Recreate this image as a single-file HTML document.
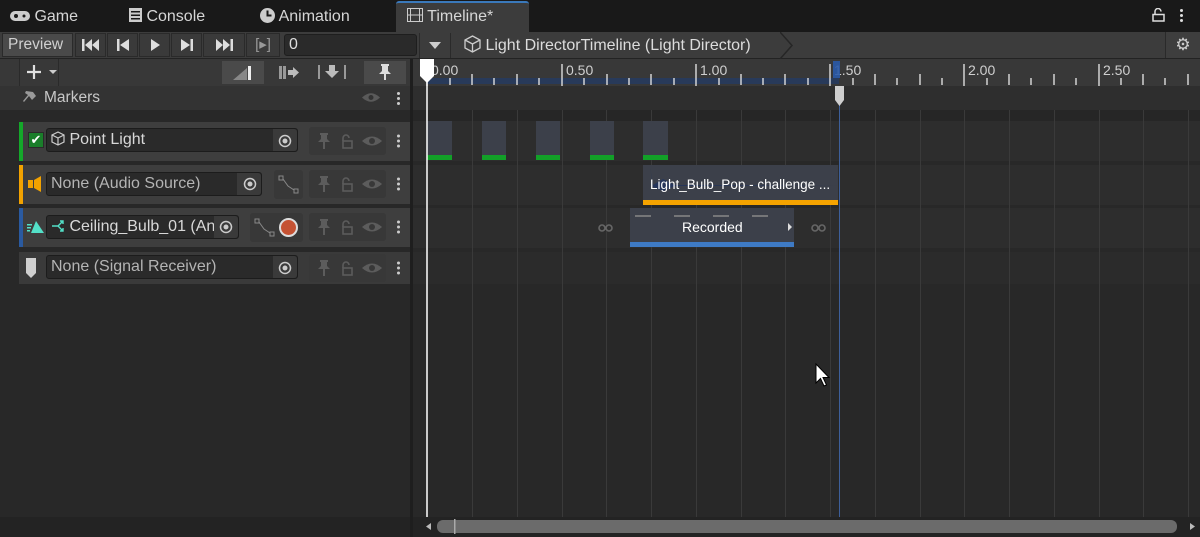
<!DOCTYPE html>
<html><head><style>
*{margin:0;padding:0;box-sizing:border-box}
body{width:1200px;height:537px;background:#282828;font-family:"Liberation Sans",sans-serif;color:#d2d2d2;position:relative;overflow:hidden;font-size:15px}
.a{position:absolute}
.tab{position:absolute;top:0;height:32px;line-height:33px;font-size:16px;color:#d6d6d6}
.btn{position:absolute;top:33px;height:24px;background:#3a3a3a;border:1px solid #2a2a2a}
.hdr{position:absolute;left:19px;width:391px;background:#3e3e3e}
.fld{position:absolute;height:24px;background:#2a2a2a;border:1px solid #1c1c1c;border-radius:3px;font-size:16px;line-height:22px;padding-left:4px;color:#d8d8d8;overflow:hidden;white-space:nowrap}
.tgt{position:absolute;top:0;right:0;width:24px;height:22px;background:#3a3a3a;border-radius:0 3px 3px 0}
.grp{position:absolute;background:#383838;border-radius:3px}
.dots{position:absolute;left:397px;width:3px}
</style></head><body>
<div class="a" style="left:0;top:0;width:1200px;height:32px;background:#191919"></div>
<div class="a" style="left:396px;top:1px;width:133px;height:31px;background:#3c3c3c;border-top:2px solid #3a79bb;border-radius:3px 3px 0 0"></div>
<div class="tab" style="left:10px"><svg width="20" height="12" style="vertical-align:-1px"><rect x="0" y="1" width="20" height="10" rx="5" fill="#ccc"/><circle cx="6" cy="6" r="2" fill="#191919"/><circle cx="14" cy="6" r="1.5" fill="#191919"/></svg> Game</div>
<div class="tab" style="left:129px"><svg width="13" height="14" style="vertical-align:-1px"><rect x="0" y="0" width="13" height="14" fill="#ccc"/><rect x="2" y="3" width="9" height="1.5" fill="#191919"/><rect x="2" y="6.5" width="9" height="1.5" fill="#191919"/><rect x="2" y="10" width="9" height="1.5" fill="#191919"/></svg> Console</div>
<div class="tab" style="left:260px"><svg width="15" height="15" style="vertical-align:-2px"><circle cx="7.5" cy="7.5" r="7.5" fill="#ccc"/><path d="M7.5 2.5V7.5H11.5" stroke="#191919" stroke-width="2" fill="none"/></svg> Animation</div>
<div class="tab" style="left:407px"><svg width="16" height="14" style="vertical-align:-1px"><rect x="0.5" y="0.5" width="15" height="13" fill="none" stroke="#ccc"/><rect x="3" y="1" width="1" height="12" fill="#ccc"/><rect x="12" y="1" width="1" height="12" fill="#ccc"/><rect x="0" y="6.5" width="16" height="1" fill="#ccc"/></svg> Timeline*</div>
<svg class="a" style="left:1152px;top:8px" width="14" height="14"><path d="M3 6V3.5A3 3 0 0 1 9 3.5" stroke="#ddd" stroke-width="1.5" fill="none"/><rect x="1" y="6.5" width="11" height="6.5" fill="none" stroke="#ddd" stroke-width="1.5"/></svg>
<div class="a" style="left:1180px;top:9px;width:3px;height:3px;background:#ddd;box-shadow:0 5px #ddd,0 10px #ddd;border-radius:2px"></div>
<div class="a" style="left:0;top:32px;width:1200px;height:27px;background:#3c3c3c;border-bottom:1px solid #232323"></div>
<div class="btn" style="left:2px;width:71px;background:#4a4a4a;font-size:15.5px;line-height:22px;padding-left:5px;color:#d0d0d0">Preview</div>
<div class="btn" style="left:75px;width:31px;text-align:center"><svg width="18" height="12" style="margin-top:5px"><rect x="0" y="0" width="2.5" height="12" fill="#ddd"/><path d="M10 0V12L3 6Z M17 0V12L10 6Z" fill="#ddd"/></svg></div>
<div class="btn" style="left:107px;width:31px;text-align:center"><svg width="12" height="12" style="margin-top:5px"><rect x="0" y="0" width="2.5" height="12" fill="#ddd"/><path d="M12 0V12L3 6Z" fill="#ddd"/></svg></div>
<div class="btn" style="left:139px;width:31px;text-align:center"><svg width="12" height="12" style="margin-top:5px"><path d="M2 0V12L11 6Z" fill="#ddd"/></svg></div>
<div class="btn" style="left:171px;width:31px;text-align:center"><svg width="12" height="12" style="margin-top:5px"><path d="M0 0V12L9 6Z" fill="#ddd"/><rect x="9.5" y="0" width="2.5" height="12" fill="#ddd"/></svg></div>
<div class="btn" style="left:203px;width:42px;text-align:center"><svg width="18" height="12" style="margin-top:5px"><path d="M1 0V12L8 6Z M8 0V12L15 6Z" fill="#ddd"/><rect x="15.5" y="0" width="2.5" height="12" fill="#ddd"/></svg></div>
<div class="btn" style="left:246px;width:34px;text-align:center;font-size:15px;line-height:22px;color:#999">[▸]</div>
<div class="a" style="left:284px;top:34px;width:133px;height:22px;background:#2a2a2a;border:1px solid #1e1e1e;border-radius:3px;font-size:16px;line-height:20px;padding-left:4px;color:#ddd">0</div>
<div class="a" style="left:419px;top:33px;width:1px;height:25px;background:#2a2a2a"></div>
<svg class="a" style="left:429px;top:42px" width="12" height="8"><path d="M0 0H12L6 7Z" fill="#ccc"/></svg>
<div class="a" style="left:450px;top:33px;width:1px;height:25px;background:#2a2a2a"></div>
<div class="a" style="left:464px;top:33px;height:25px;font-size:16px;line-height:25px;color:#dcdcdc"><svg width="17" height="18" style="vertical-align:-3px"><path d="M8.5 1L16 5V13L8.5 17L1 13V5Z M1 5L8.5 9L16 5 M8.5 9V17" stroke="#ccc" stroke-width="1.3" fill="none"/></svg> Light DirectorTimeline (Light Director)</div>
<svg class="a" style="left:780px;top:32px" width="20" height="27"><path d="M0 0L12 13.5L0 27" stroke="#262626" stroke-width="1.5" fill="none"/></svg>
<div class="a" style="left:1165px;top:32px;width:1px;height:26px;background:#2a2a2a"></div>
<div class="a" style="left:1166px;top:32px;width:34px;height:26px;background:#3e3e3e;text-align:center;font-size:17px;line-height:26px;color:#ccc">⚙</div>
<div class="a" style="left:0;top:59px;width:410px;height:27px;background:#383838"></div>
<div class="a" style="left:19px;top:59px;width:1px;height:27px;background:#2a2a2a"></div>
<div class="a" style="left:58px;top:59px;width:1px;height:27px;background:#2a2a2a"></div>
<svg class="a" style="left:26px;top:64px" width="34" height="16"><path d="M8 1V15M1 8H15" stroke="#e0e0e0" stroke-width="2.2"/><path d="M23 6H31L27 10Z" fill="#ccc"/></svg>
<div class="a" style="left:222px;top:61px;width:42px;height:23px;background:#4a4a4a"></div>
<svg class="a" style="left:233px;top:65px" width="22" height="15"><path d="M0 15L14 3V15Z" fill="#888"/><rect x="15" y="1" width="3" height="14" fill="#eee"/></svg>
<svg class="a" style="left:279px;top:66px" width="22" height="13"><rect x="0" y="0" width="3" height="13" fill="#999"/><rect x="4" y="0" width="3" height="13" fill="#999"/><path d="M9 4H14V1L20 6.5L14 12V9H9Z" fill="#bbb"/></svg>
<svg class="a" style="left:318px;top:65px" width="28" height="14"><rect x="0" y="0" width="2" height="14" fill="#999"/><rect x="26" y="0" width="2" height="14" fill="#999"/><path d="M11 0H17V6H21L14 13L7 6H11Z" fill="#bbb"/></svg>
<div class="a" style="left:364px;top:61px;width:42px;height:23px;background:#4a4a4a"></div>
<svg class="a" style="left:378px;top:64px" width="14" height="16"><path d="M3 0H11V2H10V7L13 10H8V16H6V10H1L4 7V2H3Z" fill="#ddd"/></svg>
<div class="a" style="left:0;top:86px;width:410px;height:24px;background:#333"></div>
<svg class="a" style="left:23px;top:89px" width="16" height="16"><path d="M3 2L10 3L13 7L9 11L6 7L1 13L0 12L5 6L2 4Z" fill="#9a9a9a"/></svg>
<div class="a" style="left:44px;top:86px;font-size:15.5px;line-height:23px;color:#c8c8c8">Markers</div>
<svg class="a" style="left:361px;top:92px" width="20" height="11"><path d="M1 5.5Q10 -3 19 5.5Q10 14 1 5.5Z" fill="#5a5a5a"/><circle cx="10" cy="5.5" r="2.5" fill="#333"/></svg>
<div class="dots" style="top:92px;height:3px;background:#ccc;box-shadow:0 5px #ccc,0 10px #ccc;border-radius:2px"></div>
<div class="hdr" style="top:122px;height:39px"></div><div class="a" style="left:19px;top:122px;width:4px;height:39px;background:#14a82a"></div>
<div class="hdr" style="top:165px;height:39px"></div><div class="a" style="left:19px;top:165px;width:4px;height:39px;background:#f2a200"></div>
<div class="hdr" style="top:208px;height:39px"></div><div class="a" style="left:19px;top:208px;width:4px;height:39px;background:#2a5aa0"></div>
<div class="hdr" style="top:252px;height:32px;background:#3a3a3a"></div>
<div class="a" style="left:28px;top:132px;width:16px;height:16px;background:#1a7e2a;border:1px solid #2a2a2a;color:#fff;font-size:13px;line-height:14px;text-align:center">✔</div>
<div class="fld" style="left:46px;top:128px;width:252px;padding-left:4px"><svg width="14" height="15" style="vertical-align:-2px"><path d="M7 1L13 4V11L7 14L1 11V4Z M1 4L7 7L13 4 M7 7V14" stroke="#ccc" stroke-width="1.2" fill="none"/></svg> Point Light<div class="tgt"></div></div>
<svg class="a" style="left:28px;top:176px" width="14" height="16"><rect x="0" y="4" width="5" height="8" fill="#f2a200"/><path d="M6 4L13 0V16L6 12Z" fill="#f2a200"/></svg>
<div class="fld" style="left:46px;top:172px;width:216px;color:#b4b4b4">None (Audio Source)<div class="tgt"></div></div>
<div class="grp" style="left:274px;top:170px;width:29px;height:29px"></div>
<svg class="a" style="left:27px;top:220px" width="18" height="14"><path d="M9 1L17 13H4Z" fill="#53e0c8"/><rect x="0" y="4" width="5" height="1.5" fill="#53e0c8"/><rect x="0" y="7" width="4" height="1.5" fill="#53e0c8"/><rect x="0" y="10" width="3" height="1.5" fill="#53e0c8"/></svg>
<div class="fld" style="left:46px;top:215px;width:193px;padding-right:24px"><svg width="14" height="12" style="vertical-align:-1px"><path d="M1 6H7L12 1M7 6L12 11M9 1H12V4M9 11H12V8" stroke="#53e0c8" stroke-width="1.4" fill="none"/></svg> Ceiling_Bulb_01 (Ani<div class="tgt"></div></div>
<div class="grp" style="left:250px;top:213px;width:53px;height:29px"></div>
<div class="a" style="left:279px;top:218px;width:19px;height:19px;border-radius:50%;background:#c55233;border:2px solid #ddd"></div>
<svg class="a" style="left:26px;top:258px" width="10" height="20"><path d="M0 0H10V15L5 20L0 15Z" fill="#d0d0d0"/></svg>
<div class="fld" style="left:46px;top:255px;width:252px;color:#b4b4b4">None (Signal Receiver)<div class="tgt"></div></div>
<svg class="a" style="left:278px;top:174px" width="22" height="22"><rect x="1" y="2" width="4" height="4" fill="none" stroke="#888"/><rect x="16" y="15" width="4" height="4" fill="none" stroke="#888"/><path d="M5 5L10 12L16 16" stroke="#888" fill="none"/></svg>
<svg class="a" style="left:254px;top:217px" width="22" height="22"><rect x="1" y="2" width="4" height="4" fill="none" stroke="#888"/><rect x="16" y="15" width="4" height="4" fill="none" stroke="#888"/><path d="M5 5L10 12L16 16" stroke="#888" fill="none"/></svg>
<svg class="a" style="left:0;top:0" width="410" height="300">
<defs><g id="ple"><rect x="0" y="0" width="77" height="28" rx="3" fill="#383838"/><path d="M11 6H19V8H18V12L21 15H16V22H14V15H9L12 12V8H11Z" fill="#5c5c5c"/><path d="M34 14V11A3 3 0 0 1 40 11" stroke="#5c5c5c" stroke-width="1.6" fill="none"/><rect x="34" y="14" width="9" height="7" fill="none" stroke="#5c5c5c" stroke-width="1.6"/><path d="M53 14Q63 5 73 14Q63 23 53 14Z" fill="#5c5c5c"/><circle cx="63" cy="14" r="3" fill="#383838"/></g>
<g id="dt"><circle cx="1.5" cy="0" r="1.5" fill="#ccc"/><circle cx="1.5" cy="5" r="1.5" fill="#ccc"/><circle cx="1.5" cy="10" r="1.5" fill="#ccc"/></g></defs>
<use href="#ple" x="309" y="127"/><use href="#ple" x="309" y="170"/><use href="#ple" x="309" y="213"/><use href="#ple" x="309" y="254"/>
<use href="#dt" x="397" y="136"/><use href="#dt" x="397" y="179"/><use href="#dt" x="397" y="222"/><use href="#dt" x="397" y="263"/>
<g fill="#ccc"><circle cx="285" cy="141" r="5.5" fill="none" stroke="#ccc" stroke-width="1.5"/><circle cx="285" cy="141" r="2.5"/>
<circle cx="250" cy="184" r="5.5" fill="none" stroke="#ccc" stroke-width="1.5"/><circle cx="250" cy="184" r="2.5"/>
<circle cx="226" cy="227" r="5.5" fill="none" stroke="#ccc" stroke-width="1.5"/><circle cx="226" cy="227" r="2.5"/>
<circle cx="285" cy="268" r="5.5" fill="none" stroke="#ccc" stroke-width="1.5"/><circle cx="285" cy="268" r="2.5"/></g>
</svg>
<div class="a" style="left:410px;top:59px;width:3px;height:478px;background:#1e1e1e"></div>
<div class="a" style="left:0;top:517px;width:410px;height:20px;background:#232323"></div>
<svg class="a" style="left:413px;top:59px" width="787" height="478" font-family="Liberation Sans,sans-serif">
<rect x="0" y="0" width="787" height="27" fill="#383838"/>
<rect x="14" y="19" width="412" height="6" fill="#283a5a"/>
<rect x="0" y="27" width="787" height="24" fill="#2e2e2e"/>
<rect x="0" y="51" width="787" height="11" fill="#262626"/>
<rect x="0" y="62" width="787" height="40" fill="#2d2d2d"/>
<rect x="0" y="106" width="787" height="40" fill="#2d2d2d"/>
<rect x="0" y="149" width="787" height="40" fill="#2d2d2d"/>
<rect x="0" y="193" width="787" height="32" fill="#2b2b2b"/>
<g stroke="#3a3a3a" stroke-width="1">
<path d="M59.5 51V458M104.5 51V458M149.5 51V458M193.5 51V458M238.5 51V458M283.5 51V458M328.5 51V458M372.5 51V458M417.5 51V458M462.5 51V458M507.5 51V458M551.5 51V458M596.5 51V458M641.5 51V458M686.5 51V458M730.5 51V458M775.5 51V458"/>
</g>
<g stroke="#ddd" stroke-width="1.4">
<path d="M14 5V27M149 5V27M283 5V27M417 5V27M551 5V27M686 5V27"/>
<path d="M37 19V26M59 15V26M81 19V26M104 15V26M126 19V26M171 19V26M194 15V26M216 19V26M238 15V26M261 19V26M306 19V26M328 15V26M350 19V26M372 15V26M395 19V26M440 19V26M462 15V26M484 19V26M507 15V26M529 19V26M574 19V26M596 15V26M618 19V26M641 15V26M663 19V26M708 19V26M730 15V26M752 19V26M775 15V26"/>
</g>
<g fill="#cfcfcf" font-size="14"><text x="18" y="16">0.00</text><text x="153" y="16">0.50</text><text x="287" y="16">1.00</text><text x="421" y="16">1.50</text><text x="555" y="16">2.00</text><text x="690" y="16">2.50</text></g>
<rect x="420" y="2" width="7" height="17" fill="#2a5aa8" opacity="0.9"/>
<g fill="#3c404a"><rect x="14" y="62" width="25" height="39"/><rect x="69" y="62" width="24" height="39"/><rect x="123" y="62" width="24" height="39"/><rect x="177" y="62" width="24" height="39"/><rect x="230" y="62" width="25" height="39"/></g>
<g fill="#12a028"><rect x="14" y="96" width="25" height="5"/><rect x="69" y="96" width="24" height="5"/><rect x="123" y="96" width="24" height="5"/><rect x="177" y="96" width="24" height="5"/><rect x="230" y="96" width="25" height="5"/></g>
<rect x="230" y="106" width="195" height="40" fill="#3c404a"/>
<path d="M237 108L240 126L250 120L258 124L262 126L425 126L262 127L250 132L240 128Z" fill="#25355a"/>
<rect x="230" y="141" width="195" height="5" fill="#f5a300"/>
<text x="237" y="130" fill="#fff" font-size="13.5">Light_Bulb_Pop - challenge ...</text>
<rect x="217" y="149" width="164" height="39" fill="#3c404a"/>
<rect x="217" y="183" width="164" height="5" fill="#3e7ac4"/>
<g stroke="#888" stroke-width="1.5"><path d="M222 157H238M261 157H277M300 157H316M339 157H355"/></g>
<text x="269" y="173" fill="#fff" font-size="14">Recorded</text>
<path d="M375 164L379 168L375 172Z" fill="#ddd"/>
<g fill="none" stroke="#666" stroke-width="1.6"><circle cx="189" cy="169" r="3"/><circle cx="196" cy="169" r="3"/><circle cx="402" cy="169" r="3"/><circle cx="409" cy="169" r="3"/></g>
<path d="M426.5 27V458" stroke="#3d5f9a" stroke-width="1"/>
<path d="M422 27H431V41L426.5 47L422 41Z" fill="#cfcfcf"/>
<path d="M14 0V458" stroke="#fff" stroke-width="1.5"/>
<path d="M7 0H21V17L14 24L7 17Z" fill="#fff"/>
<rect x="0" y="458" width="787" height="20" fill="#232323"/>
<path d="M18 464L13 467.5L18 471Z" fill="#bbb"/>
<rect x="24" y="461" width="740" height="13" rx="6" fill="#6b6b6b"/>
<rect x="41" y="460" width="1.5" height="15" fill="#aaa"/>
<path d="M777 464L782 467.5L777 471Z" fill="#bbb"/>
<path d="M403 305V324L407.5 319.5L411 327L413.5 326L410 318.5H416Z" fill="#fff" stroke="#000" stroke-width="1"/>
</svg>
</body></html>
